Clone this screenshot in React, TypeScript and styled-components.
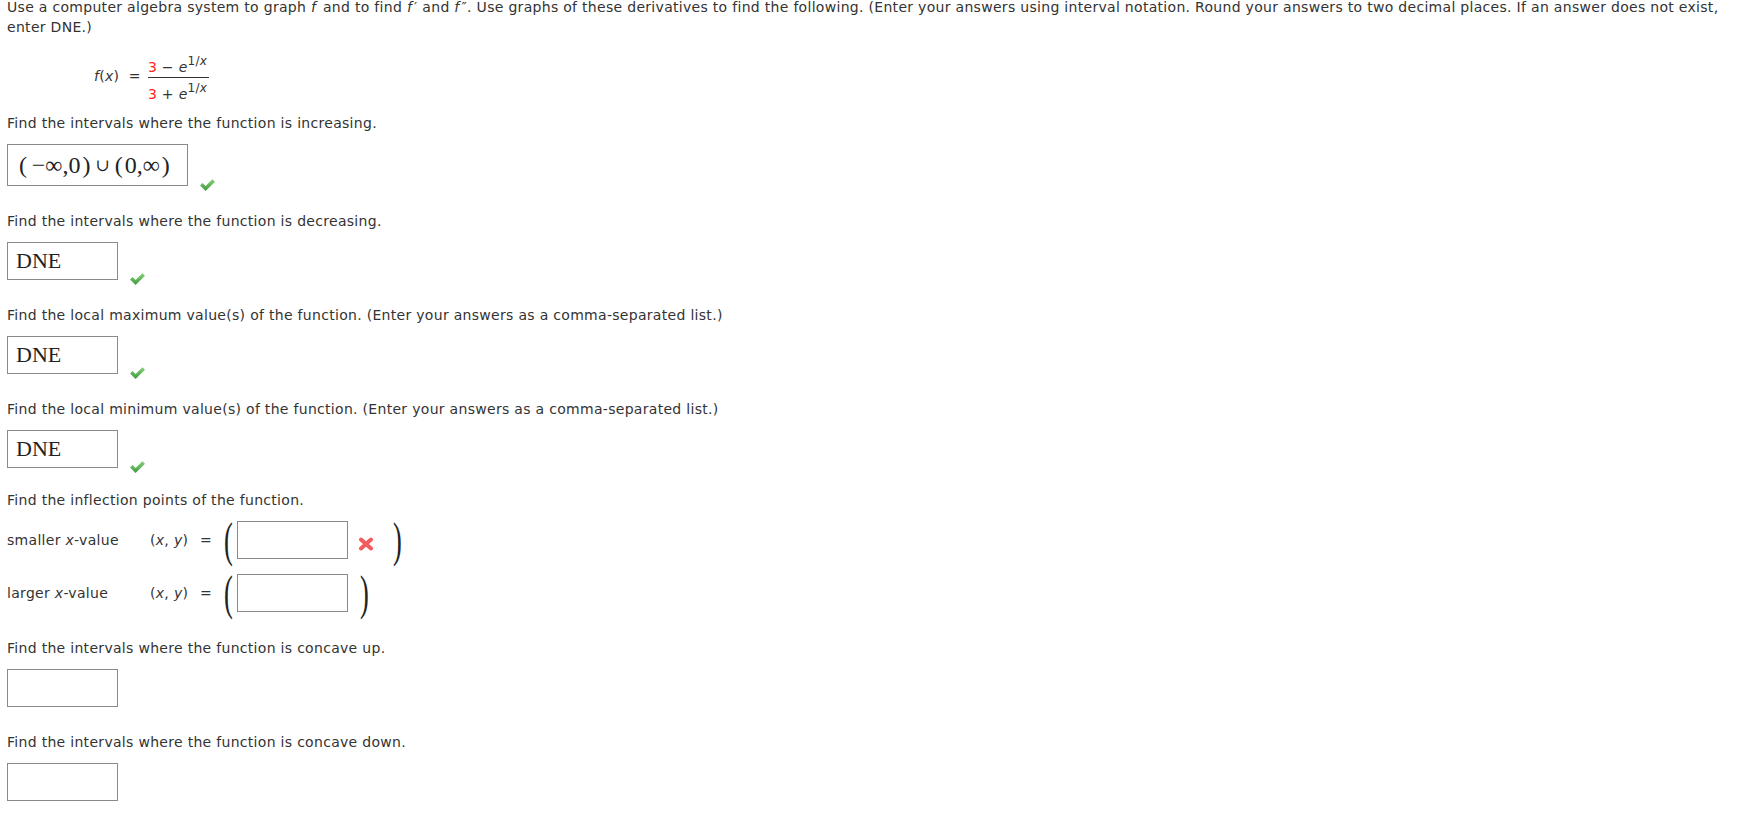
import React from "react"
import styled, { createGlobalStyle } from "styled-components"

const GlobalStyle = createGlobalStyle`
  body {
    margin: 0;
    background: #fff;
    color: #333;
    font-family: "DejaVu Sans", Verdana, sans-serif;
    font-size: 14px;
    letter-spacing: 0.3px;
  }
`

const Page = styled.div`
  padding: 0 7px;
  margin-top: -3px;
`

const Intro = styled.p`
  margin: 0;
  line-height: 20px;
`

const I = styled.i`
  font-style: italic;
`

const Var = styled.i`
  font-style: italic;
  padding-right: 2px;
`

const FormulaRow = styled.div`
  display: flex;
  align-items: center;
  margin: 18px 0 0 87px;
`

const FnName = styled.span`
  margin: 0 7px 6px 0;
  white-space: pre;
`

const Fraction = styled.span`
  display: inline-flex;
  flex-direction: column;
  align-items: stretch;
`

const FracPart = styled.span<{ $pad: number }>`
  display: block;
  padding: ${(p) => p.$pad}px 2px 0 0;
  line-height: 15px;
  white-space: pre;
`

const Bar = styled.span`
  display: block;
  height: 1px;
  background: #333;
  margin-top: 2px;
`

const Red = styled.span`
  color: #ff1f1f;
`

const Sup = styled.span`
  font-size: 12px;
  line-height: 0;
  vertical-align: 7px;
`

const Question = styled.div<{ $top?: number }>`
  padding-top: ${(p) => p.$top ?? 25}px;
`

const Label = styled.p`
  margin: 0;
  line-height: 20px;
`

const AnswerRow = styled.div`
  display: flex;
  align-items: flex-end;
  gap: 12px;
  margin-top: 11px;
`

const AnswerBox = styled.div<{ $w: number; $h: number; $pad?: number; $size?: number }>`
  box-sizing: border-box;
  width: ${(p) => p.$w}px;
  height: ${(p) => p.$h}px;
  border: 1px solid #8a8a8a;
  background: #fff;
  display: flex;
  align-items: center;
  padding-left: ${(p) => p.$pad ?? 8}px;
  font-family: "Liberation Serif", "Times New Roman", serif;
  font-size: ${(p) => p.$size ?? 22}px;
  letter-spacing: 0;
  color: #222;
  white-space: pre;
`

const Cup = styled.span`
  font-family: "DejaVu Serif", serif;
  font-size: 17px;
  font-weight: 300;
  margin: 0 5px;
`

const MarkWrap = styled.span<{ $drop: number }>`
  display: inline-flex;
  margin-bottom: -${(p) => p.$drop}px;
`

const PointRow = styled.div<{ $top: number }>`
  display: flex;
  align-items: center;
  height: 38px;
  margin-top: ${(p) => p.$top}px;
`

const PointName = styled.span`
  width: 143px;
  flex: none;
`

const Coord = styled.span`
  width: 50px;
  flex: none;
  white-space: pre;
`

const Equals = styled.span`
  width: 22px;
  flex: none;
`

const BigParen = styled.span<{ $gap: number }>`
  display: inline-block;
  font-family: "Liberation Serif", "Times New Roman", serif;
  font-size: 48px;
  line-height: 38px;
  color: #222;
  transform: scaleX(0.55);
  width: 9px;
  margin-right: ${(p) => p.$gap}px;
  text-align: center;
`

const Spacer = styled.span<{ $w: number }>`
  width: ${(p) => p.$w}px;
  flex: none;
`

const Check = () => (
  <MarkWrap $drop={5}>
    <svg width="15" height="12" viewBox="0 0 15 12">
      <defs>
        <linearGradient id="ck" x1="0" y1="0" x2="0" y2="1">
          <stop offset="0" stopColor="#86d27a" />
          <stop offset="1" stopColor="#3e9a3e" />
        </linearGradient>
      </defs>
      <path d="M0 6.5 L2.6 4 L5.6 7 L12.4 0.2 L15 2.8 L5.6 12 Z" fill="url(#ck)" />
    </svg>
  </MarkWrap>
)

const Cross = () => (
  <MarkWrap $drop={7}>
    <svg width="16" height="14" viewBox="0 0 16 14">
      <path d="M3 2.5 L13 11.5 M13 2.5 L3 11.5" stroke="#f45b5b" strokeWidth="4" strokeLinecap="round" />
    </svg>
  </MarkWrap>
)

const questions = [
  "Find the local maximum value(s) of the function. (Enter your answers as a comma-separated list.)",
  "Find the local minimum value(s) of the function. (Enter your answers as a comma-separated list.)",
]

export default function App() {
  return (
    <>
      <GlobalStyle />
      <Page>
        <Intro>
          Use a computer algebra system to graph <Var>f</Var> and to find <Var>f</Var>′ and <Var>f</Var>″. Use
          graphs of these derivatives to find the following. (Enter your answers using interval notation. Round
          your answers to two decimal places. If an answer does not exist, enter DNE.)
        </Intro>

        <FormulaRow>
          <FnName>
            <I>f</I>(<I>x</I>)  =
          </FnName>
          <Fraction>
            <FracPart $pad={5}>
              <Red>3</Red> − <I>e</I>
              <Sup>
                1/<I>x</I>
              </Sup>
            </FracPart>
            <Bar />
            <FracPart $pad={9}>
              <Red>3</Red> + <I>e</I>
              <Sup>
                1/<I>x</I>
              </Sup>
            </FracPart>
          </Fraction>
        </FormulaRow>

        <Question $top={11}>
          <Label>Find the intervals where the function is increasing.</Label>
          <AnswerRow>
            <AnswerBox $w={181} $h={42} $pad={11} $size={24}>
              (&#8201;−∞,0&#8202;)<Cup>∪</Cup>(&#8202;0,∞&#8202;)
            </AnswerBox>
            <Check />
          </AnswerRow>
        </Question>

        <Question>
          <Label>Find the intervals where the function is decreasing.</Label>
          <AnswerRow>
            <AnswerBox $w={111} $h={38}>DNE</AnswerBox>
            <Check />
          </AnswerRow>
        </Question>

        {questions.map((q) => (
          <Question key={q}>
            <Label>{q}</Label>
            <AnswerRow>
              <AnswerBox $w={111} $h={38}>DNE</AnswerBox>
              <Check />
            </AnswerRow>
          </Question>
        ))}

        <Question $top={22}>
          <Label>Find the inflection points of the function.</Label>
          <PointRow $top={11}>
            <PointName>
              smaller <I>x</I>-value
            </PointName>
            <Coord>
              (<I>x</I>, <I>y</I>)
            </Coord>
            <Equals>=</Equals>
            <BigParen $gap={6}>(</BigParen>
            <AnswerBox $w={111} $h={38} />
            <Spacer $w={10} />
            <Cross />
            <Spacer $w={17} />
            <BigParen $gap={0}>)</BigParen>
          </PointRow>
          <PointRow $top={15}>
            <PointName>
              larger <I>x</I>-value
            </PointName>
            <Coord>
              (<I>x</I>, <I>y</I>)
            </Coord>
            <Equals>=</Equals>
            <BigParen $gap={6}>(</BigParen>
            <AnswerBox $w={111} $h={38} />
            <Spacer $w={10} />
            <BigParen $gap={0}>)</BigParen>
          </PointRow>
        </Question>

        <Question $top={26}>
          <Label>Find the intervals where the function is concave up.</Label>
          <AnswerRow>
            <AnswerBox $w={111} $h={38} />
          </AnswerRow>
        </Question>

        <Question>
          <Label>Find the intervals where the function is concave down.</Label>
          <AnswerRow>
            <AnswerBox $w={111} $h={38} />
          </AnswerRow>
        </Question>
      </Page>
    </>
  )
}
